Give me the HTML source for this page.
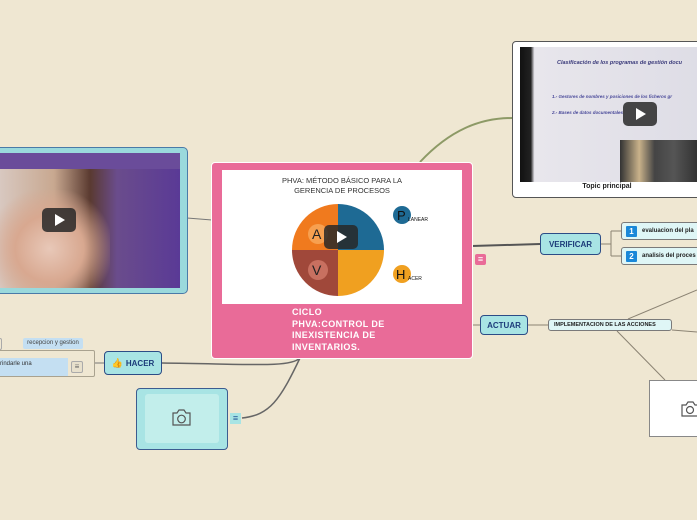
<!DOCTYPE html>
<html><head><meta charset="utf-8"><style>
*{margin:0;padding:0;box-sizing:border-box}
body{width:697px;height:520px;background:#efe7d2;position:relative;overflow:hidden;font-family:"Liberation Sans",sans-serif}
.a{position:absolute}
.btn{position:absolute;background:#a8e4e4;border:1.5px solid #2c4c86;border-radius:4px;color:#1c3b7a;font-weight:bold;font-size:8px;display:flex;align-items:center;justify-content:center}
.sub{position:absolute;background:#dff6f6;border:1px solid #7a7a7a;border-radius:3px;font-size:6px;font-weight:bold;color:#222;display:flex;align-items:center;padding-left:4px;white-space:nowrap;overflow:hidden}
.num{display:inline-block;width:11px;height:11px;background:#1a88d8;color:#fff;font-size:8px;text-align:center;line-height:11px;margin-right:5px;border-radius:1px}
.play{position:absolute;width:34px;height:24px;background:rgba(40,40,40,.85);border-radius:5px}
.play:after{content:"";position:absolute;left:13px;top:6px;border-left:10px solid #fff;border-top:6px solid transparent;border-bottom:6px solid transparent}
</style></head><body>
<svg class="a" style="left:0;top:0" width="697" height="520">
<path d="M420 162 C450 130 480 118 512 118" stroke="#8d9a66" stroke-width="2" fill="none"/>
<path d="M472 246 L540 244" stroke="#555" stroke-width="2" fill="none"/>
<path d="M601 244 H611 M611 231 V256 M611 231 H621 M611 256 H621" stroke="#8b8373" stroke-width="1" fill="none"/>
<path d="M472 325 H480 M528 325 H548" stroke="#8b8373" stroke-width="1" fill="none"/>
<path d="M628 319 L697 290 M672 330 L697 332 M617 331 L665 380" stroke="#8b8373" stroke-width="1" fill="none"/>
<path d="M300 358 C290 368 250 364 162 363" stroke="#666" stroke-width="1.5" fill="none"/>
<path d="M300 358 C280 400 270 415 242 418" stroke="#666" stroke-width="1.5" fill="none"/>
<path d="M187 218 L212 220" stroke="#777" stroke-width="1" fill="none"/>
<path d="M95 363 H104" stroke="#777" stroke-width="1" fill="none"/>
</svg>
<!-- left video -->
<div class="a" style="left:-6px;top:147px;width:194px;height:147px;background:#9ad9dc;border:1.5px solid #4a7aa8;border-radius:5px"></div>
<div class="a" style="left:0;top:153px;width:180px;height:135px;background:linear-gradient(90deg,#d8c8c0 0,#c8a890 30%,#5a3a30 50%,#6a4c8c 65%,#5a3a96 100%)"></div>
<div class="a" style="left:0;top:190px;width:110px;height:98px;background:radial-gradient(ellipse at 45% 60%,#e8c8b8 0,#d8a890 40%,rgba(90,60,50,0) 75%)"></div>
<div class="a" style="left:0;top:153px;width:180px;height:16px;background:#6a4c9a"></div>
<div class="play" style="left:42px;top:208px"></div>
<!-- topic principal -->
<div class="a" style="left:512px;top:41px;width:190px;height:157px;background:#fff;border:1.5px solid #555;border-radius:4px"></div>
<div class="a" style="left:520px;top:47px;width:180px;height:135px;background:linear-gradient(90deg,#111 0,#222 6%,#e8e6ec 8%,#dedde6 100%)"></div>
<div class="a" style="left:557px;top:60px;font-size:5.5px;font-weight:bold;font-style:italic;color:#3a3a7a;white-space:nowrap">Clasificación de los programas de gestión docu</div>
<div class="a" style="left:552px;top:94px;font-size:4.5px;font-weight:bold;font-style:italic;color:#4a4a9a;white-space:nowrap">1.- Gestores de nombres y posiciones de los ficheros gr</div>
<div class="a" style="left:552px;top:110px;font-size:4.5px;font-weight:bold;font-style:italic;color:#4a4a9a;white-space:nowrap">2.- Bases de datos documentales</div>
<div class="a" style="left:620px;top:140px;width:77px;height:42px;background:linear-gradient(90deg,#333,#c9b28a 25%,#444 45%,#555 70%,#333)"></div>
<div class="play" style="left:623px;top:102px"></div>
<div class="a" style="left:512px;top:183px;width:190px;text-align:center;font-size:7px;font-weight:bold;color:#222">Topic principal</div>
<!-- center -->
<div class="a" style="left:211px;top:162px;width:262px;height:197px;background:#e96b98;border:1.5px solid #fff;border-radius:4px"></div>
<div class="a" style="left:222px;top:170px;width:240px;height:134px;background:#fff"></div>
<div class="a" style="left:222px;top:176px;width:240px;text-align:center;font-size:7.5px;color:#333;line-height:10px">PHVA: MÉTODO BÁSICO PARA LA<br>GERENCIA DE PROCESOS</div>
<svg class="a" style="left:222px;top:170px" width="240" height="134">
<path d="M116 80 L116 34 A46 46 0 0 0 70 80Z" fill="#f07a1e"/>
<path d="M116 80 L116 34 A46 46 0 0 1 162 80Z" fill="#1e6a94"/>
<path d="M116 80 L162 80 A46 46 0 0 1 116 126Z" fill="#f0a020"/>
<path d="M116 80 L116 126 A46 46 0 0 1 70 80Z" fill="#a0483a"/>
<circle cx="180" cy="45" r="9" fill="#1e6a94"/><text x="175" y="50" font-size="13" fill="#111">P</text><text x="186" y="51" font-size="5" fill="#111">LANEAR</text>
<circle cx="180" cy="104" r="9" fill="#f0a020"/><text x="174" y="109" font-size="13" fill="#111">H</text><text x="186" y="110" font-size="5" fill="#111">ACER</text>
<circle cx="96" cy="64" r="10" fill="#f7a050"/><text x="90" y="69" font-size="14" fill="#222">A</text>
<circle cx="96" cy="100" r="10" fill="#c87060"/><text x="90" y="105" font-size="14" fill="#222">V</text>
</svg>
<div class="play" style="left:324px;top:225px"></div>
<div class="a" style="left:292px;top:307px;font-size:9px;font-weight:bold;color:#fff;line-height:11.5px;letter-spacing:.4px">CICLO<br>PHVA:CONTROL DE<br>INEXISTENCIA DE<br>INVENTARIOS.</div>
<div class="a" style="left:475px;top:254px;width:11px;height:11px;background:#e96b98;border-radius:2px;color:#fff;font-size:9px;line-height:10px;text-align:center">≡</div>
<!-- verificar -->
<div class="btn" style="left:540px;top:233px;width:61px;height:22px">VERIFICAR</div>
<div class="sub" style="left:621px;top:222px;width:80px;height:18px"><span class="num">1</span>evaluacion del pla</div>
<div class="sub" style="left:621px;top:247px;width:80px;height:18px"><span class="num">2</span>analisis del proces</div>
<!-- actuar -->
<div class="btn" style="left:480px;top:315px;width:48px;height:20px;font-size:8px">ACTUAR</div>
<div class="sub" style="left:548px;top:319px;width:124px;height:12px;font-size:5.5px;padding-left:5px">IMPLEMENTACION DE LAS ACCIONES</div>
<div class="a" style="left:649px;top:380px;width:55px;height:57px;background:#fff;border:1.5px solid #888"></div>
<svg class="a" style="left:680px;top:400px" width="20" height="18"><path d="M2 5 H6 L8 2 H13 L15 5 H19 V16 H2Z" fill="none" stroke="#555" stroke-width="1.2"/><circle cx="10" cy="10" r="3.5" fill="none" stroke="#555" stroke-width="1.2"/></svg>
<!-- hacer -->
<div class="btn" style="left:104px;top:351px;width:58px;height:24px;font-size:8px"><span style="font-size:9px;margin-right:3px">👍</span>HACER</div>
<div class="a" style="left:-5px;top:350px;width:100px;height:27px;border:1px solid #a9a28f;border-radius:2px"></div>
<div class="a" style="left:0;top:358px;width:68px;height:18px;background:#c4dff2;font-size:6px;color:#333;padding:3px 0 0 0">rindarle una</div>
<div class="a" style="left:71px;top:361px;width:12px;height:12px;background:#e7e0cc;border:1px solid #aaa;border-radius:2px;font-size:8px;text-align:center;line-height:10px;color:#666">≡</div>
<div class="a" style="left:23px;top:338px;width:60px;height:11px;background:#c4dff2;border-radius:2px;font-size:6px;color:#444;text-align:center;line-height:11px">recepcion y gestion</div>
<div class="a" style="left:-5px;top:338px;width:7px;height:12px;border:1px solid #aaa;border-radius:2px"></div>
<!-- camera node -->
<div class="a" style="left:136px;top:388px;width:92px;height:62px;background:#a8e4e4;border:1.5px solid #3c5c90;border-radius:4px"></div>
<div class="a" style="left:145px;top:394px;width:74px;height:49px;background:#c2eeeb;border-radius:3px"></div>
<svg class="a" style="left:171px;top:408px" width="21" height="19"><path d="M2 5 H6 L8 2 H13 L15 5 H19 V17 H2Z" fill="none" stroke="#555" stroke-width="1.2"/><circle cx="10.5" cy="11" r="3.8" fill="none" stroke="#555" stroke-width="1.2"/></svg>
<div class="a" style="left:230px;top:413px;width:11px;height:11px;background:#a8e4e4;color:#2a5a9a;font-size:9px;line-height:10px;text-align:center">≡</div>
</body></html>
